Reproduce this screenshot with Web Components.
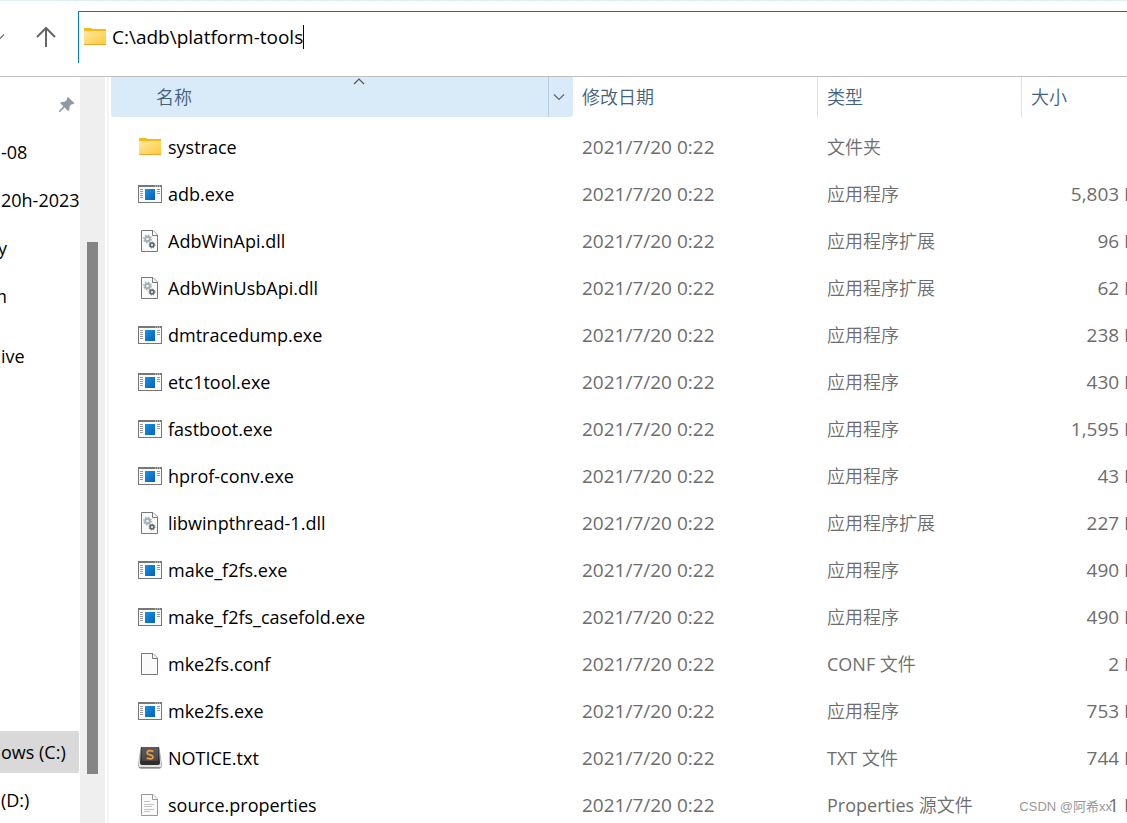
<!DOCTYPE html>
<html lang="zh-CN">
<head>
<meta charset="UTF-8">
<title>platform-tools</title>
<style>
    body {
        margin: 0;
        height: 100vh;
        overflow: hidden;
        background: white;
        color: #000;
        font-family: "Open Sans", "Noto Sans CJK SC", sans-serif;
        font-size: 19px;
    }
</style>
</head>
<body>
<explorer-window>
    <address-bar slot="top" path="C:\adb\platform-tools"></address-bar>
    <nav-pane slot="side">
        <nav-item pinned></nav-item>
        <nav-item>-08</nav-item>
        <nav-item>20h-2023</nav-item>
        <nav-item cut>y</nav-item>
        <nav-item cut>m</nav-item>
        <nav-item apart>ive</nav-item>
        <nav-item slot="drives" selected>ows (C:)</nav-item>
        <nav-item slot="drives">(D:)</nav-item>
    </nav-pane>
    <file-table slot="files"></file-table>
    <span slot="mark">CSDN @阿希xx</span>
</explorer-window>

<script>
class ExplorerWindow extends HTMLElement {
    constructor() {
        super();
        this.attachShadow({ mode: 'open' });
    }

    connectedCallback() {
        this.shadowRoot.innerHTML = `
        <style>
            :host {
                display: flex;
                flex-direction: column;
                height: 100%;
                position: relative;
            }
            main {
                display: flex;
                flex: 1;
                min-height: 0;
            }
            .files {
                flex: 1;
                min-width: 0;
                overflow: hidden;
                margin-left: 2px;
                border-left: 2px solid #f5f5f5;
                padding-left: 2px;
            }
            .mark {
                position: absolute;
                right: 15px;
                bottom: 7px;
                font: 13px/18px "Liberation Sans", "Noto Sans CJK SC", sans-serif;
                color: #999;
            }
        </style>
        <slot name="top"></slot>
        <main>
            <slot name="side"></slot>
            <div class="files"><slot name="files"></slot></div>
        </main>
        <div class="mark"><slot name="mark"></slot></div>
        `;
    }
}
customElements.define('explorer-window', ExplorerWindow);

class AddressBar extends HTMLElement {
    constructor() {
        super();
        this.attachShadow({ mode: 'open' });
    }

    connectedCallback() {
        this.shadowRoot.innerHTML = `
        <style>
            :host {
                display: flex;
                box-sizing: border-box;
                height: 77px;
                padding: 10px 0 13px;
                border-top: 1px solid #e0eff0;
                border-bottom: 1px solid #bfbfbf;
            }
            button {
                border: 0;
                padding: 0;
                background: none;
                display: flex;
                align-items: center;
            }
            .recent { width: 30px; }
            .up { width: 48px; padding-left: 6px; }
            .box {
                flex: 1;
                display: flex;
                align-items: center;
                border: 1px solid #0078d4;
                border-width: 1px 0 0 1px;
                padding: 0 0 2px 4px;
            }
            input {
                field-sizing: content;
                border: 0;
                outline: 0;
                padding: 0;
                margin-left: 5px;
                background: none;
                font: inherit;
                color: inherit;
            }
            .caret {
                width: 1px;
                height: 24px;
                background: #000;
            }
        </style>
        <button class="recent" aria-label="最近的位置">
            <svg width="8" height="8" viewBox="0 0 8 8" fill="none" stroke="#777" stroke-width="1.3"><path d="M-4 1.5L0 5.5L4 1.5"/></svg>
        </button>
        <button class="up" aria-label="向上">
            <svg width="20" height="22" viewBox="0 0 20 22" fill="none" stroke="#666" stroke-width="2"><path d="M10 21V2M1 11L10 2L19 11"/></svg>
        </button>
        <div class="box">
            <file-icon kind="folder"></file-icon>
            <input type="text" aria-label="地址" spellcheck="false">
            <span class="caret"></span>
        </div>
        `;
        this.shadowRoot.querySelector('input').value = this.getAttribute('path');
    }
}
customElements.define('address-bar', AddressBar);

class NavPane extends HTMLElement {
    constructor() {
        super();
        this.attachShadow({ mode: 'open' });
    }

    connectedCallback() {
        this.shadowRoot.innerHTML = `
        <style>
            :host {
                display: flex;
                flex: none;
                font-size: 18px;
            }
            nav {
                width: 80px;
                padding-top: 3px;
                box-sizing: border-box;
                overflow: hidden;
            }
            .drives { margin-top: 348px; }
            .track {
                width: 25px;
                background: #efefef;
                display: grid;
                grid-template-rows: 165fr 532fr 49fr;
                justify-items: center;
            }
            .thumb {
                grid-row: 2;
                width: 11px;
                background: #858585;
            }
        </style>
        <nav>
            <slot></slot>
            <div class="drives"><slot name="drives"></slot></div>
        </nav>
        <div class="track"><div class="thumb"></div></div>
        `;
    }
}
customElements.define('nav-pane', NavPane);

class NavItem extends HTMLElement {
    constructor() {
        super();
        this.attachShadow({ mode: 'open' });
    }

    connectedCallback() {
        const pin = `<svg width="16" height="17" viewBox="0 0 16 17" fill="#8f9ba3"><path d="M9 1L15.500 7.200L14 8.200L12.600 8.200L10.600 10.500L10.300 14L9 15L5.600 11.600L1 16L0 16L0 15L4.300 10.300L1.200 7.200L2.300 6L5.800 5.800L8 3.800L7.900 2Z"/></svg>`;
        this.shadowRoot.innerHTML = `
        <style>
            :host {
                display: block;
                height: 48px;
                padding: 3px 1px 3px 0;
                box-sizing: border-box;
                white-space: nowrap;
            }
            :host([apart]) { margin-top: 12px; }
            :host([cut]) a { width: 6px; justify-content: flex-end; }
            :host([selected]) a { background: #d9d9d9; }
            :host([pinned]) a { justify-content: flex-end; padding-right: 4px; }
            a {
                display: flex;
                align-items: center;
                height: 42px;
                border-radius: 0 2px 2px 0;
                padding-left: 1px;
                color: inherit;
                text-decoration: none;
            }
        </style>
        <a href="#">${this.hasAttribute('pinned') ? pin : ''}<slot></slot></a>
        `;
    }
}
customElements.define('nav-item', NavItem);

const ICONS = {
    folder: `
        <defs><linearGradient id="f" x1="0" y1="0" x2="1" y2="1"><stop offset="0" stop-color="#ffe9a2"/><stop offset="1" stop-color="#ffc937"/></linearGradient></defs>
        <path fill="#f8b816" d="M1 7V3.500Q1 3 1.500 3H8L9.500 4H23V12H1Z"/>
        <rect x="1" y="6" width="22" height="14" fill="url(#f)"/>
        <path fill="#eaa92d" d="M1 19H23V20H1Z"/>`,
    exe: `
        <defs><linearGradient id="e" x1="0" y1="0" x2="1" y2="1"><stop offset="0" stop-color="#1793e6"/><stop offset="1" stop-color="#0560b6"/></linearGradient></defs>
        <rect x=".5" y="3.500" width="23" height="17" fill="#fafafa" stroke="#777"/>
        <path fill="#777" d="M0 3H24V5H0Z"/>
        <path stroke="#ddd" d="M17 4H18M19 4H20M21 4H22"/>
        <rect x="7" y="7" width="10" height="11" fill="url(#e)"/>
        <path stroke="#999" d="M2 7.500H5M2 9.500H5M2 11.500H5M2 13.500H5M2 15.500H5M19 7.500H22M19 9.500H22M19 11.500H22"/>`,
    dll: `
        <path fill="#fafafa" stroke="#777" d="M3.500 1.500H15L19.500 6V22.500H3.500Z"/>
        <path fill="#fff" stroke="#777" d="M14.500 1.500V6.500H19.500"/>
        <circle cx="9.500" cy="10" r="2.300" fill="none" stroke="#a3adb5" stroke-width="2"/>
        <circle cx="9.500" cy="10" r="3.700" fill="none" stroke="#a3adb5" stroke-width="1.400" stroke-dasharray="1.450 1.450"/>
        <circle cx="14" cy="16" r="1.900" fill="none" stroke="#5e6a73" stroke-width="1.700"/>
        <circle cx="14" cy="16" r="3" fill="none" stroke="#5e6a73" stroke-width="1" stroke-dasharray="1.180 1.180"/>`,
    file: `
        <path fill="#fafafa" stroke="#777" d="M3.500 1.500H15L19.500 6V22.500H3.500Z"/>
        <path fill="#fff" stroke="#777" d="M14.500 1.500V6.500H19.500"/>`,
    text: `
        <path fill="#fafafa" stroke="#999" d="M3.500 1.500H15L19.500 6V22.500H3.500Z"/>
        <path fill="#fff" stroke="#999" d="M14.500 1.500V6.500H19.500"/>
        <path stroke="#c4c4c4" d="M6 8.500H12M6 11.500H16M6 13.500H14M6 16.500H16M6 18.500H12"/>`,
    sublime: `
        <defs><linearGradient id="s" x1="0" y1="0" x2="0" y2="1"><stop offset="0" stop-color="#5c5c5c"/><stop offset="1" stop-color="#484848"/></linearGradient></defs>
        <path fill="#e4e4e4" stroke="#b5b5b5" d="M3 1.500H21L23.500 18V20Q23.500 22 21.500 22H2.500Q.5 22 .5 20V18Z"/>
        <path fill="#888" d="M1 21H23L22 22.500H2Z"/>
        <path fill="#2d2d2d" d="M3 1H21L22 17Q22 19 20 19H4Q2 19 2 17Z"/>
        <path fill="url(#s)" d="M3.500 1H20.500L20 15H4Z"/>
        <path fill="none" stroke="#f29a3c" stroke-width="1.800" d="M15.300 5.300Q9.200 3.500 9.200 6.700Q9.200 8.300 12 8.800Q15 9.500 15 11.300Q14.500 14 8.700 12.200"/>`
};

class FileIcon extends HTMLElement {
    constructor() {
        super();
        this.attachShadow({ mode: 'open' });
    }

    connectedCallback() {
        this.shadowRoot.innerHTML = `
        <style>
            :host { display: block; flex: none; width: 24px; height: 24px; }
            svg { display: block; }
        </style>
        <svg width="24" height="24" viewBox="0 0 24 24" fill="none">${ICONS[this.getAttribute('kind')]}</svg>
        `;
    }
}
customElements.define('file-icon', FileIcon);

const FILES = [
    ['folder', 'systrace', '文件夹', ''],
    ['exe', 'adb.exe', '应用程序', '5,803 KB'],
    ['dll', 'AdbWinApi.dll', '应用程序扩展', '96 KB'],
    ['dll', 'AdbWinUsbApi.dll', '应用程序扩展', '62 KB'],
    ['exe', 'dmtracedump.exe', '应用程序', '238 KB'],
    ['exe', 'etc1tool.exe', '应用程序', '430 KB'],
    ['exe', 'fastboot.exe', '应用程序', '1,595 KB'],
    ['exe', 'hprof-conv.exe', '应用程序', '43 KB'],
    ['dll', 'libwinpthread-1.dll', '应用程序扩展', '227 KB'],
    ['exe', 'make_f2fs.exe', '应用程序', '490 KB'],
    ['exe', 'make_f2fs_casefold.exe', '应用程序', '490 KB'],
    ['file', 'mke2fs.conf', 'CONF 文件', '2 KB'],
    ['exe', 'mke2fs.exe', '应用程序', '753 KB'],
    ['sublime', 'NOTICE.txt', 'TXT 文件', '744 KB'],
    ['text', 'source.properties', 'Properties 源文件', '1 KB']
];

class FileTable extends HTMLElement {
    constructor() {
        super();
        this.attachShadow({ mode: 'open' });
    }

    connectedCallback() {
        // latin words need the regular weight next to the lighter chinese
        const rows = FILES.map(([kind, name, type, size]) => `
            <tr>
                <td><div class="name"><file-icon kind="${kind}"></file-icon>${name}</div></td>
                <td>2021/7/20 0:22</td>
                <td class="type">${type.replace(/[A-Za-z]+ /, '<span class="latin">$&</span>')}</td>
                <td class="size">${size}</td>
            </tr>`).join('');

        this.shadowRoot.innerHTML = `
        <style>
            :host { display: block; }
            table {
                table-layout: fixed;
                width: 1046px;
                border-collapse: separate;
                border-spacing: 0;
                line-height: 24px;
                white-space: nowrap;
            }
            .c-name { width: 462px; }
            .c-date { width: 245px; }
            .c-type { width: 204px; }
            th {
                height: 40px;
                padding: 0;
                font-weight: 350;
                font-size: 18px;
                text-align: left;
                border-right: 1px solid #e2e2e2;
                box-sizing: border-box;
            }
            th:first-child, th:last-child { border: 0; }
            button {
                border: 0;
                padding: 0 0 0 9px;
                background: none;
                font: inherit;
                color: #44607e;
                text-align: left;
                height: 40px;
                width: 100%;
            }
            .sorted {
                position: relative;
                display: flex;
                background: #d9eaf8;
                border-radius: 0 0 3px 3px;
            }
            .sorted button { flex: 1; padding-left: 45px; }
            .sorted .filter {
                flex: none;
                width: 25px;
                padding: 0 4px 0 0;
                border-left: 1px solid #b9cfe0;
                display: flex;
                align-items: center;
                justify-content: center;
            }
            .arrow {
                position: absolute;
                left: 242px;
                top: 1px;
            }
            tbody::before {
                content: "";
                display: table-row;
                height: 6px;
            }
            td {
                height: 47px;
                padding: 0 0 0 9px;
                color: #6d6d6d;
            }
            td:first-child { padding-left: 27px; color: #000; font-size: 18px; }
            .name { display: flex; align-items: center; gap: 6px; }
            td.type { font-size: 18px; font-weight: 350; }
            .latin { font-weight: 400; }
            td.size { text-align: right; padding-right: 9px; }
        </style>
        <table>
            <colgroup><col class="c-name"><col class="c-date"><col class="c-type"><col></colgroup>
            <thead>
                <tr>
                    <th aria-sort="ascending">
                        <div class="sorted">
                            <button>名称</button>
                            <button class="filter" aria-label="筛选"><svg width="12" height="8" viewBox="0 0 12 8" fill="none" stroke="#666" stroke-width="1.2"><path d="M1 1.500L6 6.500L11 1.500"/></svg></button>
                            <svg class="arrow" width="12" height="7" viewBox="0 0 12 7" fill="none" stroke="#555" stroke-width="1.2"><path d="M1 6L6 1L11 6"/></svg>
                        </div>
                    </th>
                    <th><button>修改日期</button></th>
                    <th><button>类型</button></th>
                    <th><button>大小</button></th>
                </tr>
            </thead>
            <tbody>${rows}</tbody>
        </table>
        `;
    }
}
customElements.define('file-table', FileTable);
</script>
</body>
</html>
